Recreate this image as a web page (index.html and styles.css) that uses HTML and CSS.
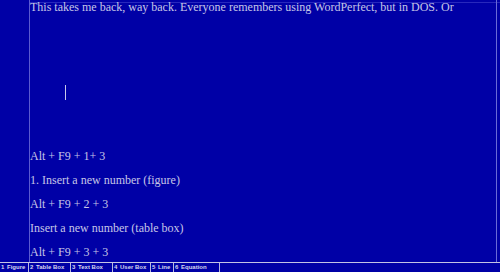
FILE: index.html
```html
<!DOCTYPE html>
<html>
<head>
<meta charset="utf-8">
<link rel="stylesheet" href="styles.css">
</head>
<body>
<div class="screen">
  <div class="doc">
    <div class="gutter"></div>
    <div class="page">
      <p class="intro">This takes me back, way back. Everyone remembers using WordPerfect, but in DOS. Or</p>
      <div class="caret-row"><span class="caret"></span></div>
      <p class="line">Alt + F9 + 1+ 3</p>
      <p class="line">1. Insert a new number (figure)</p>
      <p class="line">Alt + F9 + 2 + 3</p>
      <p class="line">Insert a new number (table box)</p>
      <p class="line">Alt + F9 + 3 + 3</p>
    </div>
    <div class="rightbar"></div>
  </div>
  <div class="status">
    <span class="cell"><b>1</b> Figure</span>
    <span class="cell"><b>2</b> Table Box</span>
    <span class="cell"><b>3</b> Text Box</span>
    <span class="cell"><b>4</b> User Box</span>
    <span class="cell"><b>5</b> Line</span>
    <span class="cell"><b>6</b> Equation</span>
  </div>
</div>
</body>
</html>
```
FILE: styles.css
```css
html, body {
  margin: 0;
  padding: 0;
  background: #0000a6;
}
.screen {
  width: 500px;
  height: 272px;
  overflow: hidden;
  background: #0000a6;
  display: flex;
  flex-direction: column;
}
.doc {
  height: 262px;
  display: flex;
  border-bottom: 1px solid #c4c4e4;
  overflow: hidden;
  background: linear-gradient(#2828bc, #2828bc) 29px 2px / 100% 1px no-repeat;
}
.gutter {
  width: 29px;
  flex: none;
}
.page {
  flex: 1;
  border-left: 1px solid #5a5ad0;
  border-right: 1px solid #6a6ad6;
  font-family: "Liberation Serif", "Times New Roman", serif;
  font-size: 12px;
  color: #c6c6e6;
}
.intro {
  margin: 0;
  padding-top: 1px;
  line-height: 12px;
  white-space: nowrap;
}
.caret-row {
  margin-top: 72px;
  height: 15px;
  padding-left: 35px;
}
.caret {
  display: inline-block;
  width: 1px;
  height: 15px;
  background: #c8c8ea;
  vertical-align: top;
}
.caret-row + .line {
  margin-top: 44px;
}
.line {
  margin: 0;
  line-height: 24px;
  white-space: nowrap;
}
.rightbar {
  width: 3px;
  flex: none;
}
.status {
  height: 9px;
  display: grid;
  grid-template-columns: 29px 42px 42px 38px 23px 46px;
  font-family: "Liberation Sans", Arial, sans-serif;
  font-size: 6px;
  font-weight: bold;
  color: #d6d6ee;
  line-height: 9px;
}
.cell {
  padding-left: 1px;
  border-right: 1px solid #b8b8e0;
  white-space: nowrap;
  overflow: hidden;
}
.cell b {
  margin-right: 1px;
}
```
